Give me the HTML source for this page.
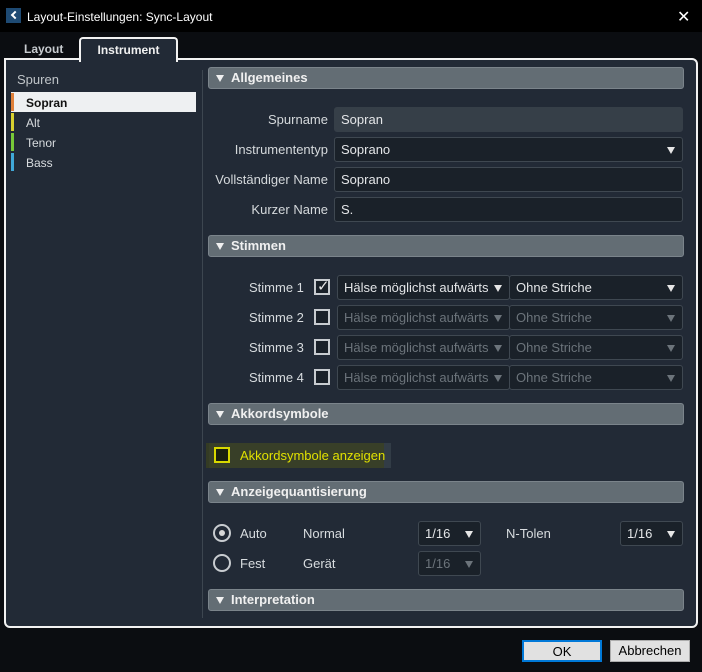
<!DOCTYPE html>
<html><head><meta charset="utf-8"><style>
*{box-sizing:border-box;margin:0;padding:0}
body{width:702px;height:672px;background:#0b0d11;font-family:"Liberation Sans",sans-serif;font-size:13px;color:#d8dcdf;position:relative;overflow:hidden}
.a{position:absolute}
.title{left:0;top:0;width:702px;height:32px;background:#000;color:#fff;font-size:12px}
.panel{left:4px;top:58px;width:694px;height:570px;background:#222a36;border:2px solid #f2f2f2;border-radius:0 6px 6px 6px}
.hdr{left:208px;width:476px;height:22px;background:#636d74;border:1px solid #7b848b;border-radius:3px;color:#f0f0f0;font-weight:bold;font-size:13px;line-height:20px;padding-left:22px}
.hdr:before{content:"";position:absolute;left:7px;top:7px;border-left:4px solid transparent;border-right:4px solid transparent;border-top:7px solid #f0f0f0}
.lbl{text-align:right;width:120px;left:208px;color:#d5d9dc}
.inp{height:25px;background:#1a2129;border:1px solid #3f4851;border-radius:3px;line-height:23px;padding-left:6px;color:#e4e6e8}
.dis{color:#6c747b}
.tri{position:absolute;right:7px;top:9px;border-left:4px solid transparent;border-right:4px solid transparent;border-top:7px solid #e6e6e6}
.dis .tri{border-top-color:#6c747b}
.cb{width:16px;height:16px;border:2px solid #c8ccd0;background:#1a2129}
.rad{width:18px;height:18px;border:2px solid #c8ccd0;border-radius:50%}
.btn{height:22px;background:#e1e1e1;border:1px solid #adadad;color:#000;text-align:center;line-height:20px}
</style></head><body>
<div class="a title">
 <div class="a" style="left:6px;top:8px;width:15px;height:15px;background:#1e4a73"><div class="a" style="left:6px;top:4px;width:6px;height:6px;border-left:2px solid #fff;border-bottom:2px solid #fff;transform:rotate(45deg)"></div></div>
 <div class="a" style="left:27px;top:10px">Layout-Einstellungen: Sync-Layout</div>
 <div class="a" style="left:677px;top:7px;font-size:16px">✕</div>
</div>
<div class="a" style="left:24px;top:42px;font-weight:bold;color:#c8ccd0;font-size:12px">Layout</div>
<div class="a panel"></div>
<div class="a" style="left:79px;top:37px;width:99px;height:25px;background:#222a36;border:2px solid #f2f2f2;border-bottom:none;border-radius:4px 4px 0 0;text-align:center;font-weight:bold;color:#f0f0f0;line-height:22px;font-size:12px">Instrument</div>
<div class="a" style="left:17px;top:72px;color:#c0c5c9">Spuren</div>
<div class="a" style="left:11px;top:92px;width:185px;height:20px;background:#eef0f2"></div>
<div class="a" style="left:11px;top:93px;width:3px;height:18px;background:#e0803a"></div>
<div class="a" style="left:26px;top:96px;color:#111;font-weight:bold;font-size:12px">Sopran</div>
<div class="a" style="left:11px;top:113px;width:3px;height:18px;background:#d8d030"></div>
<div class="a" style="left:26px;top:116px;font-size:12px">Alt</div>
<div class="a" style="left:11px;top:133px;width:3px;height:18px;background:#78c838"></div>
<div class="a" style="left:26px;top:136px;font-size:12px">Tenor</div>
<div class="a" style="left:11px;top:153px;width:3px;height:18px;background:#40a8d8"></div>
<div class="a" style="left:26px;top:156px;font-size:12px">Bass</div>
<div class="a" style="left:202px;top:70px;width:1px;height:548px;background:#3d4650"></div>

<div class="a hdr" style="top:67px">Allgemeines</div>
<div class="a lbl" style="top:112px">Spurname</div>
<div class="a inp" style="left:334px;top:107px;width:349px;background:#363f48;border-color:#363f48">Sopran</div>
<div class="a lbl" style="top:142px">Instrumententyp</div>
<div class="a inp" style="left:334px;top:137px;width:349px">Soprano<span class="tri"></span></div>
<div class="a lbl" style="top:172px">Vollständiger Name</div>
<div class="a inp" style="left:334px;top:167px;width:349px">Soprano</div>
<div class="a lbl" style="top:202px">Kurzer Name</div>
<div class="a inp" style="left:334px;top:197px;width:349px">S.</div>

<div class="a hdr" style="top:235px">Stimmen</div>
<div class="a" style="left:249px;top:280px">Stimme 1</div>
<div class="a cb" style="left:314px;top:279px"><span class="a" style="left:1px;top:-4px;font-size:15px;color:#e6e6e6">✓</span></div>
<div class="a inp" style="left:337px;top:275px;width:173px">Hälse möglichst aufwärts<span class="tri"></span></div>
<div class="a inp" style="left:509px;top:275px;width:174px">Ohne Striche<span class="tri"></span></div>
<div class="a" style="left:249px;top:310px">Stimme 2</div>
<div class="a cb" style="left:314px;top:309px"></div>
<div class="a inp dis" style="left:337px;top:305px;width:173px">Hälse möglichst aufwärts<span class="tri"></span></div>
<div class="a inp dis" style="left:509px;top:305px;width:174px">Ohne Striche<span class="tri"></span></div>
<div class="a" style="left:249px;top:340px">Stimme 3</div>
<div class="a cb" style="left:314px;top:339px"></div>
<div class="a inp dis" style="left:337px;top:335px;width:173px">Hälse möglichst aufwärts<span class="tri"></span></div>
<div class="a inp dis" style="left:509px;top:335px;width:174px">Ohne Striche<span class="tri"></span></div>
<div class="a" style="left:249px;top:370px">Stimme 4</div>
<div class="a cb" style="left:314px;top:369px"></div>
<div class="a inp dis" style="left:337px;top:365px;width:173px">Hälse möglichst aufwärts<span class="tri"></span></div>
<div class="a inp dis" style="left:509px;top:365px;width:174px">Ohne Striche<span class="tri"></span></div>

<div class="a hdr" style="top:403px">Akkordsymbole</div>
<div class="a" style="left:209px;top:443px;width:182px;height:25px;background:#323c46"></div>
<div class="a" style="left:206px;top:443px;width:178px;height:25px;background:#3a4020;opacity:.8"></div>
<div class="a" style="left:214px;top:447px;width:16px;height:16px;border:2px solid #d8d800;background:#1a2010"></div>
<div class="a" style="left:240px;top:448px;color:#e0e000">Akkordsymbole anzeigen</div>

<div class="a hdr" style="top:481px">Anzeigequantisierung</div>
<div class="a rad" style="left:213px;top:524px"><span class="a" style="left:4px;top:4px;width:6px;height:6px;border-radius:50%;background:#d8d8d8"></span></div>
<div class="a" style="left:240px;top:526px">Auto</div>
<div class="a" style="left:303px;top:526px">Normal</div>
<div class="a inp" style="left:418px;top:521px;width:63px">1/16<span class="tri"></span></div>
<div class="a" style="left:506px;top:526px">N-Tolen</div>
<div class="a inp" style="left:620px;top:521px;width:63px">1/16<span class="tri"></span></div>
<div class="a rad" style="left:213px;top:554px"></div>
<div class="a" style="left:240px;top:556px">Fest</div>
<div class="a" style="left:303px;top:556px">Gerät</div>
<div class="a inp dis" style="left:418px;top:551px;width:63px">1/16<span class="tri"></span></div>

<div class="a hdr" style="top:589px">Interpretation</div>

<div class="a btn" style="left:522px;top:640px;width:80px;border:2px solid #0078d7">OK</div>
<div class="a btn" style="left:610px;top:640px;width:80px">Abbrechen</div>
</body></html>
